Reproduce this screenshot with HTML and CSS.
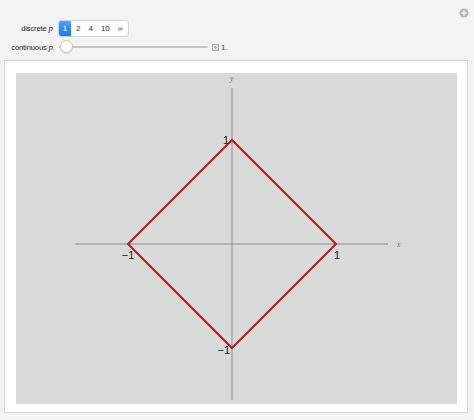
FILE: index.html
```html
<!DOCTYPE html>
<html>
<head>
<meta charset="utf-8">
<link rel="stylesheet" href="styles.css">
</head>
<body>
<div class="app">
  <div class="topbar">
    <svg class="plus" width="10" height="10" viewBox="0 0 10 10">
      <circle cx="5" cy="5" r="4.5" fill="#b4b4b4"/>
      <path d="M5 2.6V7.4M2.6 5H7.4" stroke="#fff" stroke-width="1.3"/>
    </svg>
  </div>
  <div class="controls">
    <div class="row">
      <div class="label">discrete <i>p</i></div>
      <div class="seg">
        <span class="btn on">1</span>
        <span class="btn">2</span>
        <span class="btn">4</span>
        <span class="btn">10</span>
        <span class="btn inf">∞</span>
      </div>
    </div>
    <div class="row row2">
      <div class="label">continuous <i>p</i></div>
      <div class="slider">
        <div class="track"></div>
        <div class="thumb"></div>
      </div>
      <svg class="plusbox" width="7" height="7" viewBox="0 0 7 7">
        <rect x="0.5" y="0.5" width="6" height="6" fill="#e6e6e6" stroke="#a8a8a8"/>
        <path d="M3.5 1.8V5.2M1.8 3.5H5.2" stroke="#a8a8a8" stroke-width="0.8"/>
      </svg>
      <span class="value">1.</span>
    </div>
  </div>
  <div class="panel">
    <div class="plot">
      <svg width="441" height="331" viewBox="0 0 441 331">
        <line x1="59" y1="171" x2="372" y2="171" stroke="#8a8a8a" stroke-width="1"/>
        <line x1="216" y1="15" x2="216" y2="327" stroke="#8a8a8a" stroke-width="1"/>
        <text x="381" y="174" class="axl">x</text>
        <text x="214" y="8" class="axl">y</text>
        <polygon points="216,67 320,171 216,275 112,171" fill="none" stroke="#b01c22" stroke-width="2" stroke-linejoin="miter"/>
        <text x="213" y="71" class="tick" text-anchor="end">1</text>
        <text x="112" y="186" class="tick" text-anchor="middle">−1</text>
        <text x="321" y="186" class="tick" text-anchor="middle">1</text>
        <text x="214" y="281" class="tick" text-anchor="end">−1</text>
      </svg>
    </div>
  </div>
</div>
</body>
</html>
```
FILE: styles.css
```css
html, body {
  margin: 0;
  padding: 0;
  background: #f3f3f3;
}
.app {
  width: 474px;
  height: 420px;
  font-family: "Liberation Sans", Arial, sans-serif;
  color: #222;
  position: relative;
}
.topbar {
  height: 19px;
}
.plus {
  position: absolute;
  right: 5px;
  top: 8px;
}
.controls {
  display: flex;
  flex-direction: column;
}
.row {
  display: flex;
  align-items: center;
  height: 18px;
}
.row2 {
  margin-top: 1px;
}
.label {
  width: 54px;
  text-align: right;
  font-size: 7.5px;
  color: #2a2a2a;
  padding-right: 1px;
  box-sizing: border-box;
  letter-spacing: -0.1px;
  white-space: nowrap;
}
.label i {
  font-family: "Liberation Serif", serif;
  font-size: 9px;
}
.seg {
  display: flex;
  height: 17px;
  background: #fff;
  border: 1px solid #d2d2d2;
  border-radius: 3px;
  box-sizing: border-box;
  margin-left: 4px;
  overflow: hidden;
}
.btn {
  display: flex;
  align-items: center;
  justify-content: center;
  font-size: 8px;
  color: #333;
  padding: 0 4px;
}
.btn.on {
  background: linear-gradient(#4da0f5, #1f7ae8);
  color: #fff;
  width: 12px;
  padding: 0;
}
.btn:nth-child(2) { margin-left: 1px; }
.btn:nth-child(4) { padding: 0 4px; }
.btn.inf { padding: 0 5px 0 4px; font-size: 7px; }
.slider {
  position: relative;
  width: 149px;
  height: 16px;
  margin-left: 5px;
}
.track {
  position: absolute;
  left: 0;
  right: 0;
  top: 7px;
  height: 2px;
  background: #c6c6c6;
  border-radius: 1px;
}
.thumb {
  position: absolute;
  left: 1px;
  top: 1px;
  width: 13px;
  height: 13px;
  border-radius: 50%;
  background: #fff;
  border: 1px solid #c4c4c4;
  box-sizing: border-box;
  box-shadow: 0 1px 1px rgba(0,0,0,0.12);
}
.plusbox {
  margin-left: 4px;
}
.value {
  font-size: 8px;
  margin-left: 2px;
  color: #333;
}
.panel {
  position: absolute;
  left: 4px;
  top: 60px;
  width: 464px;
  height: 353px;
  background: #fff;
  border: 1px solid #d6d6d6;
  box-sizing: border-box;
  padding: 12px 0 0 11px;
}
.plot {
  width: 441px;
  height: 331px;
  background: #dadada;
}
.plot svg { display: block; }
.tick {
  font-family: "Liberation Sans", Arial, sans-serif;
  font-size: 11px;
  fill: #1a1a1a;
}
.axl {
  font-family: "Liberation Serif", serif;
  font-style: italic;
  font-size: 7.5px;
  fill: #6a6a6a;
}
```
